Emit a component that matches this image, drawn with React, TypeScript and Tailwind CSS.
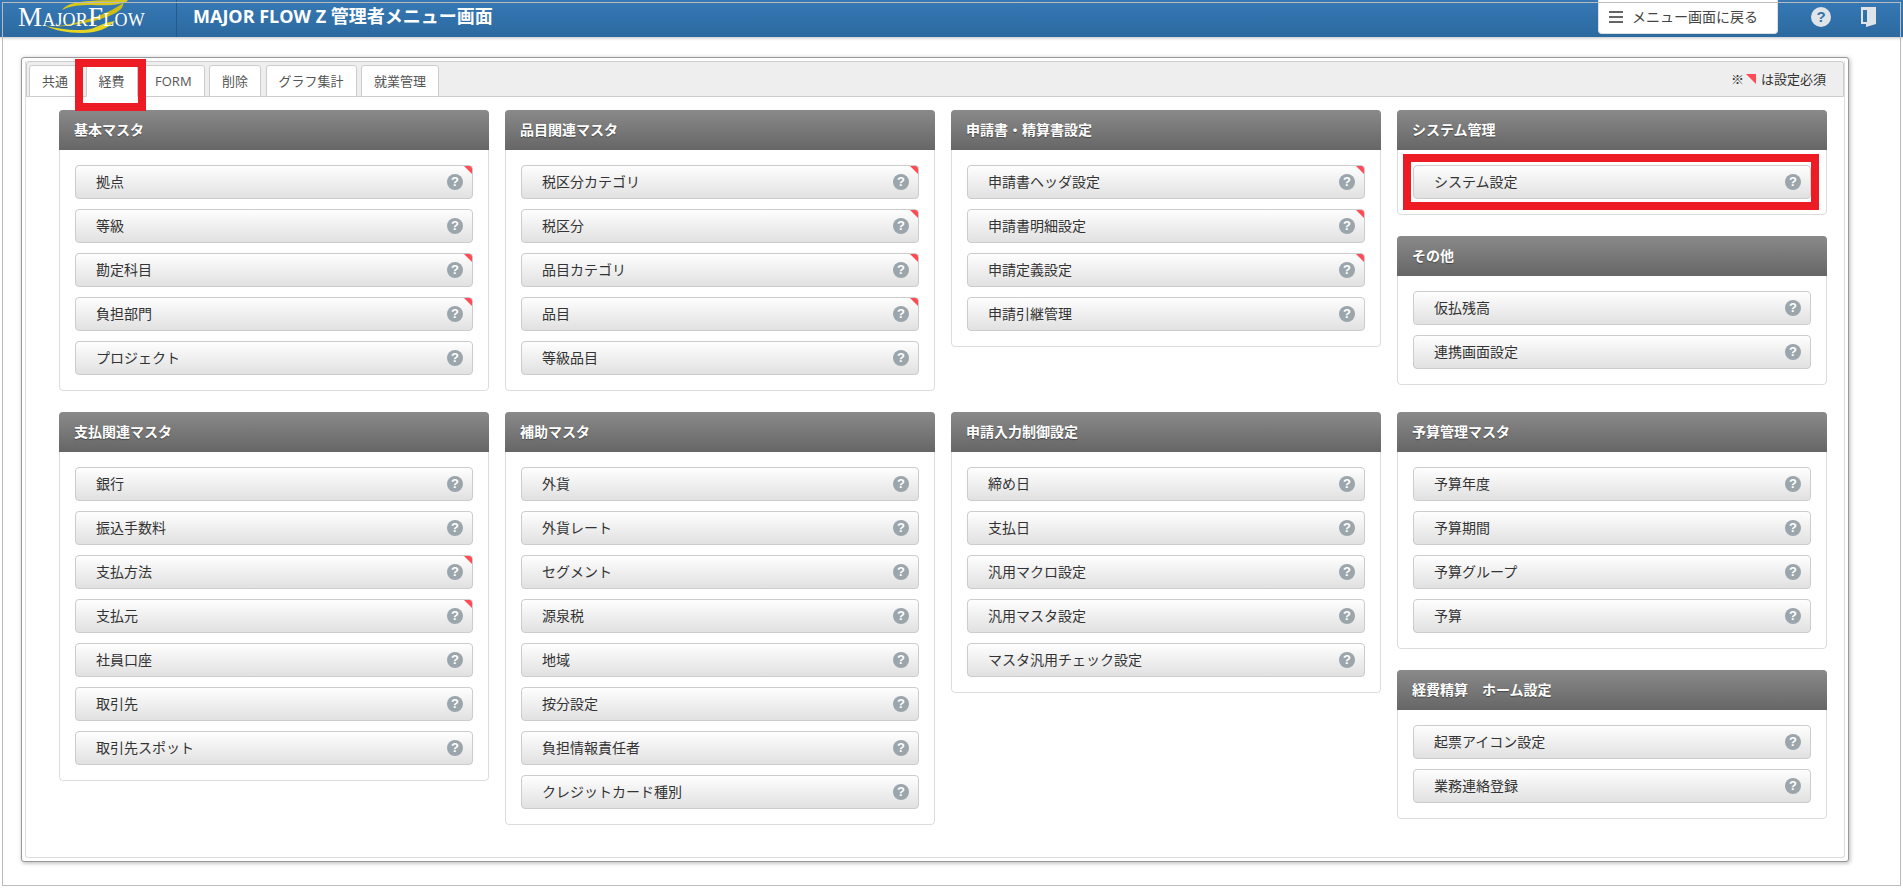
import React from 'react'

const font = "font-['Open_Sans','Noto_Sans_CJK_JP',sans-serif]"

type Item = { label: string; required?: boolean }
type Section = { title: string; items: Item[] }

const r = (label: string): Item => ({ label, required: true })
const n = (label: string): Item => ({ label })

const columns: { top: Section[]; bottom: Section[] }[] = [
  {
    top: [{ title: '基本マスタ', items: [r('拠点'), n('等級'), r('勘定科目'), r('負担部門'), n('プロジェクト')] }],
    bottom: [{ title: '支払関連マスタ', items: [n('銀行'), n('振込手数料'), r('支払方法'), r('支払元'), n('社員口座'), n('取引先'), n('取引先スポット')] }],
  },
  {
    top: [{ title: '品目関連マスタ', items: [r('税区分カテゴリ'), r('税区分'), r('品目カテゴリ'), r('品目'), n('等級品目')] }],
    bottom: [{ title: '補助マスタ', items: [n('外貨'), n('外貨レート'), n('セグメント'), n('源泉税'), n('地域'), n('按分設定'), n('負担情報責任者'), n('クレジットカード種別')] }],
  },
  {
    top: [{ title: '申請書・精算書設定', items: [r('申請書ヘッダ設定'), r('申請書明細設定'), r('申請定義設定'), n('申請引継管理')] }],
    bottom: [{ title: '申請入力制御設定', items: [n('締め日'), n('支払日'), n('汎用マクロ設定'), n('汎用マスタ設定'), n('マスタ汎用チェック設定')] }],
  },
  {
    top: [
      { title: 'システム管理', items: [n('システム設定')] },
      { title: 'その他', items: [n('仮払残高'), n('連携画面設定')] },
    ],
    bottom: [
      { title: '予算管理マスタ', items: [n('予算年度'), n('予算期間'), n('予算グループ'), n('予算')] },
      { title: '経費精算　ホーム設定', items: [n('起票アイコン設定'), n('業務連絡登録')] },
    ],
  },
]

const tabs = ['共通', '経費', 'FORM', '削除', 'グラフ集計', '就業管理']

function Logo() {
  return (
    <div className="relative w-[177px] h-[37px] shrink-0 border-r border-[#24598c] overflow-hidden">
      <svg className="absolute left-0 top-0" width="176" height="37" viewBox="0 0 176 37">
        <path d="M62 10 C68 3 76 0 128 0 C126 4 112 6 92 5 C78 5 70 6 62 10 Z" fill="#d8c81c" />
        <path d="M124 2 C110 14 84 22 54 27 C80 25 112 19 122 8 Z" fill="#cfbc14" />
        <path d="M46 26 C60 29 84 33 96 27 C102 24 108 22 115 21 C108 29 96 33 82 33 C66 33 54 30 46 26 Z" fill="#e6d622" />
      </svg>
      <div className="absolute left-[18px] top-[3px] flex items-baseline font-['Liberation_Serif',serif] text-white leading-[28px] tracking-[0.2px]">
        <span className="text-[27px]">M</span>
        <span className="text-[18px]">AJOR</span>
        <span className="text-[27px]">F</span>
        <span className="text-[18px]">LOW</span>
      </div>
    </div>
  )
}

function Header() {
  return (
    <header className="flex h-[37px] bg-gradient-to-b from-[#3679b6] to-[#2c699f] shadow-[0_1px_3px_rgba(0,0,0,0.25)]">
      <Logo />
      <h1 className="ml-[16px] text-[18px] font-bold text-white leading-[32px] whitespace-nowrap">MAJOR FLOW Z 管理者メニュー画面</h1>
      <div className="ml-auto flex items-start">
        <button className="flex items-center w-[180px] h-[34px] pl-[10px] bg-white border border-[#ddd] border-t-0 rounded-b-[4px] text-[14px] text-[#444] leading-[32px]">
          <span className="flex flex-col gap-[3px] w-[14px] mr-[9px]">
            <span className="h-[2px] bg-[#666]" />
            <span className="h-[2px] bg-[#666]" />
            <span className="h-[2px] bg-[#666]" />
          </span>
          メニュー画面に戻る
        </button>
        <span className="ml-[33px] mt-[7px] w-[20px] h-[20px] rounded-full bg-[#dfe4e8] text-[#3273ad] text-[15px] font-bold font-['Liberation_Sans',sans-serif] leading-[20px] text-center">?</span>
        <svg className="ml-[30px] mt-[7px]" width="15" height="20" viewBox="0 0 15 20">
          <path d="M0 0 H15 V17 L5 20 V17 H0 Z M2 3 V15 H6 V3 Z" fill="#dfe4e8" fillRule="evenodd" />
        </svg>
        <span className="w-[27px]" />
      </div>
    </header>
  )
}

function MenuButton({ item }: { item: Item }) {
  return (
    <a className="relative flex items-center justify-between h-[34px] pl-[20px] pr-[9px] border border-[#ccc] rounded-[4px] bg-gradient-to-b from-[#fefefe] to-[#e1e1e1] text-[14px] text-[#333] leading-[32px] overflow-hidden">
      {item.label}
      <span className="w-[16px] h-[16px] rounded-full bg-[#9ba5ac] text-white text-[13px] font-bold font-['Liberation_Sans',sans-serif] leading-[16px] text-center">?</span>
      {item.required && (
        <span className="absolute -right-px -top-px w-0 h-0 border-t-[10px] border-l-[10px] border-t-[#ff4b55] border-l-transparent" />
      )}
    </a>
  )
}

function Panel({ section }: { section: Section }) {
  return (
    <section className="border border-[#ddd] rounded-[4px] bg-white">
      <h2 className="h-[40px] -mx-px -mt-px pl-[15px] rounded-t-[4px] bg-gradient-to-b from-[#8a8a8a] to-[#666] text-[14px] font-bold text-white leading-[40px] [text-shadow:0_1px_1px_rgba(0,0,0,0.4)]">
        {section.title}
      </h2>
      <div className="flex flex-col gap-[10px] px-[15px] pt-[15px] pb-[15px]">
        {section.items.map((item) => (
          <MenuButton key={item.label} item={item} />
        ))}
      </div>
    </section>
  )
}

function Tabs() {
  return (
    <div className="flex items-end justify-between h-[36px] pl-[2px] bg-[#eee] border border-[#ccc] rounded-t-[3px]">
      <ul className="flex gap-[4.5px] -mb-px">
        {tabs.map((tab) => (
          <li
            key={tab}
            className={`h-[32px] px-[12px] border border-[#ccc] rounded-t-[3px] bg-white text-[13px] text-[#555] leading-[31px] ${
              tab === '経費' ? 'border-b-white' : ''
            }`}
          >
            {tab}
          </li>
        ))}
      </ul>
      <div className="flex items-center self-center mr-[17px] text-[13px] text-[#333] leading-[18px]">
        ※
        <span className="ml-[2px] mr-[5px] w-0 h-0 border-t-[10px] border-l-[10px] border-t-[#ff4b55] border-l-transparent" />
        は設定必須
      </div>
    </div>
  )
}

export default function App() {
  return (
    <div className={`relative w-[1903px] h-[892px] overflow-hidden bg-white ${font}`}>
      <Header />
      <main className="mt-[20px] ml-[21px] w-[1828px] h-[805px] p-[3px] bg-white border border-[#999] rounded-[3px] shadow-[1px_1px_4px_rgba(0,0,0,0.3)]">
        <div className="h-full border border-[#ddd] border-t-0 rounded-b-[3px] bg-white">
          <Tabs />
          <div className="grid grid-cols-[repeat(4,430px)] gap-x-[16px] grid-rows-[281px_auto] gap-y-[21px] pl-[33px] pt-[13px]">
            {columns.map((col) => (
              <React.Fragment key={col.top[0].title}>
                <div className="row-start-1 flex flex-col gap-[21px]">
                  {col.top.map((s) => (
                    <Panel key={s.title} section={s} />
                  ))}
                </div>
                <div className="row-start-2 flex flex-col gap-[21px]">
                  {col.bottom.map((s) => (
                    <Panel key={s.title} section={s} />
                  ))}
                </div>
              </React.Fragment>
            ))}
          </div>
        </div>
      </main>

      {/* annotation overlays from the manual screenshot */}
      <div className="absolute left-[75px] top-[59px] w-[71px] h-[52px] border-[8px] border-[#ed1c24]" />
      <div className="absolute left-[1403px] top-[154px] w-[416px] h-[56px] border-[8px] border-[#ed1c24]" />
      <div className="absolute left-[2px] top-[2px] w-[1899px] h-[884px] border border-[#bbb] pointer-events-none" />
    </div>
  )
}
